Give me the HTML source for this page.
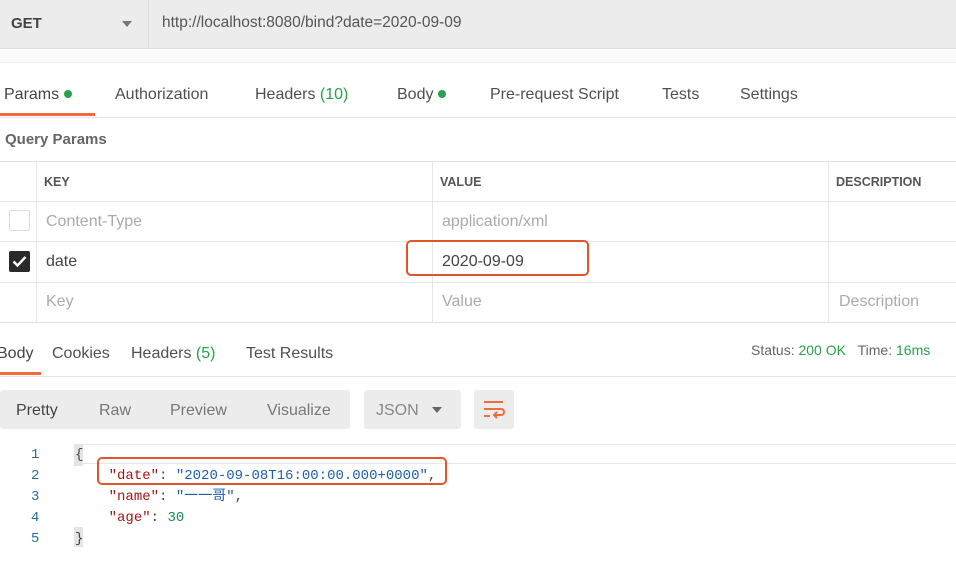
<!DOCTYPE html>
<html><head><meta charset="utf-8"><style>
*{margin:0;padding:0;box-sizing:border-box}
body{width:956px;height:564px;background:#fff;font-family:"Liberation Sans","Noto Sans CJK SC",sans-serif;color:#505050;position:relative;overflow:hidden;font-size:16px}
.a{position:absolute;white-space:nowrap}
.g{color:#26a34a}
.dot{display:inline-block;width:8px;height:8px;border-radius:50%;background:#26a34a;margin-left:5px;vertical-align:1px}
.mono{font-family:"Liberation Mono","Noto Sans CJK SC",monospace;font-size:14px}
.k{color:#a31515}.s{color:#1f5fab}.n{color:#1b8a5a}
</style></head><body>
<div class="a" style="left:0;top:0;width:956px;height:49px;background:#ececec;border-bottom:1px solid #ddd"></div>
<div class="a" style="left:148px;top:0;width:1px;height:49px;background:#d8d8d8"></div>
<div class="a" style="left:11px;top:15px;font-weight:bold;color:#444;font-size:15px">GET</div>
<div class="a" style="left:122px;top:21px;width:0;height:0;border-left:5px solid transparent;border-right:5px solid transparent;border-top:6px solid #777"></div>
<div class="a" style="left:162px;top:14px;color:#555;font-size:15.5px">http://localhost:8080/bind?date=2020-09-09</div>
<div class="a" style="left:0;top:50px;width:956px;height:13px;background:#fafafa;border-bottom:1px solid #eee"></div>

<div class="a" style="left:4px;top:86px;color:#444">Params<span class="dot"></span></div>
<div class="a" style="left:115px;top:86px">Authorization</div>
<div class="a" style="left:255px;top:86px">Headers <span class="g">(10)</span></div>
<div class="a" style="left:397px;top:86px">Body<span class="dot"></span></div>
<div class="a" style="left:490px;top:86px">Pre-request Script</div>
<div class="a" style="left:662px;top:86px">Tests</div>
<div class="a" style="left:740px;top:86px">Settings</div>
<div class="a" style="left:0;top:113px;width:95px;height:3px;background:#f26b3a"></div>
<div class="a" style="left:0;top:117px;width:956px;height:1px;background:#e4e4e4"></div>

<div class="a" style="left:5px;top:131px;font-weight:bold;color:#666;font-size:15px">Query Params</div>

<div class="a" style="left:0;top:161px;width:956px;height:162px;border-top:1px solid #e2e2e2;border-bottom:1px solid #e2e2e2"></div>
<div class="a" style="left:0;top:201px;width:956px;height:1px;background:#e8e8e8"></div>
<div class="a" style="left:0;top:241px;width:956px;height:1px;background:#e8e8e8"></div>
<div class="a" style="left:0;top:282px;width:956px;height:1px;background:#e8e8e8"></div>
<div class="a" style="left:36px;top:161px;width:1px;height:162px;background:#e6e6e6"></div>
<div class="a" style="left:432px;top:161px;width:1px;height:162px;background:#e6e6e6"></div>
<div class="a" style="left:828px;top:161px;width:1px;height:162px;background:#e6e6e6"></div>
<div class="a" style="left:44px;top:175px;font-size:12.5px;font-weight:bold;color:#555">KEY</div>
<div class="a" style="left:440px;top:175px;font-size:12.5px;font-weight:bold;color:#555">VALUE</div>
<div class="a" style="left:836px;top:175px;font-size:12.5px;font-weight:bold;color:#555">DESCRIPTION</div>
<div class="a" style="left:9px;top:210px;width:21px;height:21px;border:1px solid #ddd;border-radius:2px"></div>
<div class="a" style="left:46px;top:213px;color:#aaa">Content-Type</div>
<div class="a" style="left:442px;top:213px;color:#aaa">application/xml</div>
<div class="a" style="left:9px;top:251px;width:21px;height:21px;background:#2a2a2a;border-radius:2px"></div>
<svg class="a" style="left:9px;top:251px" width="21" height="21"><path d="M4.5 10.5l4 4 8-8.5" stroke="#fff" stroke-width="2.4" fill="none"/></svg>
<div class="a" style="left:46px;top:253px;color:#444">date</div>
<div class="a" style="left:442px;top:253px;color:#444">2020-09-09</div>
<div class="a" style="left:406px;top:240px;width:183px;height:36px;border:2px solid #e0552a;border-radius:5px"></div>
<div class="a" style="left:46px;top:293px;color:#aaa">Key</div>
<div class="a" style="left:442px;top:293px;color:#aaa">Value</div>
<div class="a" style="left:839px;top:293px;color:#aaa">Description</div>

<div class="a" style="left:-3px;top:345px;color:#444">Body</div>
<div class="a" style="left:52px;top:345px">Cookies</div>
<div class="a" style="left:131px;top:345px">Headers <span class="g">(5)</span></div>
<div class="a" style="left:246px;top:345px">Test Results</div>
<div class="a" style="left:751px;top:342px;font-size:14px;color:#666">Status: <span class="g">200 OK</span>&nbsp;&nbsp;&nbsp;Time: <span class="g">16ms</span></div>
<div class="a" style="left:0;top:372px;width:41px;height:3px;background:#f26b3a"></div>
<div class="a" style="left:0;top:376px;width:956px;height:1px;background:#e4e4e4"></div>

<div class="a" style="left:0;top:390px;width:350px;height:39px;background:#ececec;border-radius:3px"></div>
<div class="a" style="left:16px;top:402px;color:#444">Pretty</div>
<div class="a" style="left:99px;top:402px;color:#777">Raw</div>
<div class="a" style="left:170px;top:402px;color:#777">Preview</div>
<div class="a" style="left:267px;top:402px;color:#777">Visualize</div>
<div class="a" style="left:364px;top:390px;width:97px;height:39px;background:#ececec;border-radius:3px"></div>
<div class="a" style="left:376px;top:402px;color:#888">JSON</div>
<div class="a" style="left:432px;top:407px;width:0;height:0;border-left:5px solid transparent;border-right:5px solid transparent;border-top:6px solid #666"></div>
<div class="a" style="left:474px;top:390px;width:40px;height:39px;background:#ececec;border-radius:3px"></div>
<svg class="a" style="left:482px;top:398px" width="24" height="24"><path d="M2 4h19M2 11h17a3 3 0 0 1 0 6h-6M2 18h6M15 14l-3 3 3 3" stroke="#f26b3a" stroke-width="2" fill="none"/></svg>

<div class="a" style="left:74px;top:444px;width:882px;height:1px;background:#e8e8e8"></div>
<div class="a" style="left:74px;top:463px;width:882px;height:1px;background:#e8e8e8"></div>
<div class="a" style="left:74px;top:444px;width:9px;height:22px;background:#e4e4e4"></div>
<div class="a" style="left:74px;top:527px;width:9px;height:20px;background:#e4e4e4"></div>
<div class="mono a" style="left:31px;top:445px;line-height:21px;color:#2a6f97">1<br>2<br>3<br>4<br>5</div>
<div class="mono a" style="left:75px;top:445px;line-height:21px;color:#444">{<br>&nbsp;&nbsp;&nbsp;&nbsp;<span class="k">"date"</span>: <span class="s">"2020-09-08T16:00:00.000+0000"</span>,<br>&nbsp;&nbsp;&nbsp;&nbsp;<span class="k">"name"</span>: <span class="s">"一一哥"</span>,<br>&nbsp;&nbsp;&nbsp;&nbsp;<span class="k">"age"</span>: <span class="n">30</span><br>}</div>
<div class="a" style="left:97px;top:457px;width:350px;height:28px;border:2px solid #e0552a;border-radius:5px"></div>
</body></html>
